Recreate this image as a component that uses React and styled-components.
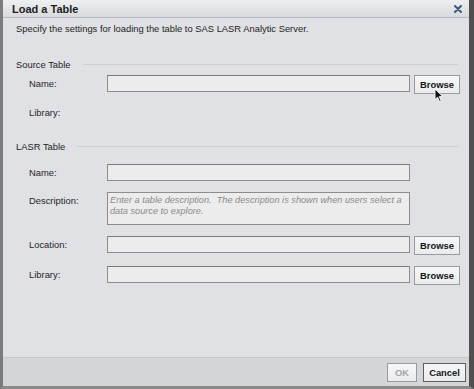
import styled, { createGlobalStyle } from "styled-components"

const Global = createGlobalStyle`
  html, body { margin: 0; padding: 0; }
  body { background: #6f6f6f; font-family: "Liberation Sans", Arial, sans-serif; }
`

const Frame = styled.div`
  width: 474px;
  height: 389px;
  box-sizing: border-box;
  display: flex;
  background: #5d5d5d;
  border-left: 3px solid #7c7c7c;
  border-right: 5px solid #4f4f4f;
  border-bottom: 3px solid #8a8a8a;
`

const Dialog = styled.div`
  flex: 1;
  min-width: 0;
  display: flex;
  flex-direction: column;
  background: #e0e1e4;
  position: relative;
`

const TitleBar = styled.div`
  height: 17px;
  display: flex;
  align-items: center;
  justify-content: space-between;
  padding: 0 7px 0 9px;
  background: linear-gradient(#eeeff1, #d8dadd);
  border-bottom: 1px solid #b8bbc0;
`

const Title = styled.div`
  font-size: 11px;
  font-weight: bold;
  color: #1d1d1d;
`

const Body = styled.div`
  flex: 1;
  padding: 4px 9px 0 13px;
`

const Intro = styled.div`
  font-size: 9.4px;
  line-height: 14px;
  color: #1e1e1e;
`

const SectionHead = styled.div`
  display: flex;
  align-items: center;
  height: 14px;
  margin: ${p => p.$top}px 2px 0 0;
  font-size: 9.4px;
  color: #1e1e1e;
  &::after {
    content: "";
    flex: 1;
    height: 1px;
    margin-left: 12px;
    background: #cdcfd3;
  }
`

const Rows = styled.div`
  display: flex;
  flex-direction: column;
  gap: ${p => p.$gap}px;
  margin-top: ${p => p.$top}px;
  padding-left: 13px;
`

const Row = styled.div`
  display: grid;
  grid-template-columns: 74px 303px 46px;
  column-gap: 4px;
  align-items: start;
  min-height: 17px;
`

const Label = styled.div`
  font-size: 9.4px;
  color: #262626;
  line-height: ${p => (p.$top ? "14px" : "17px")};
  padding-top: ${p => (p.$top ? "2px" : "0")};
`

const Input = styled.div`
  height: 17px;
  box-sizing: border-box;
  background: #ececec;
  border: 1px solid #8d8d8d;
  border-top-color: #7a7a7a;
`

const TextArea = styled.div`
  height: 33px;
  box-sizing: border-box;
  background: #ececec;
  border: 1px solid #8d8d8d;
  padding: 2px 2px;
  font-size: 9.2px;
  font-style: italic;
  line-height: 10.5px;
  color: #8a8a8a;
`

const Button = styled.div`
  height: 19px;
  box-sizing: border-box;
  display: flex;
  align-items: center;
  justify-content: center;
  background: linear-gradient(#f6f7f8, #eaebed);
  border: 1px solid ${p => (p.$strong ? "#5e5e5e" : "#9a9b9e")};
  font-size: 9.4px;
  font-weight: bold;
  color: ${p => (p.$disabled ? "#a3a4a7" : "#151515")};
  width: ${p => p.$w}px;
`

const Footer = styled.div`
  height: 28px;
  border-top: 1px solid #c6c8cc;
  background: #d3d5d9;
  display: flex;
  align-items: center;
  justify-content: flex-end;
  gap: 6px;
  padding-right: 3px;
`

const Cursor = styled.svg`
  position: absolute;
  left: 431px;
  top: 88px;
`

function Field({ label, browse }) {
  return (
    <Row>
      <Label>{label}</Label>
      <Input />
      {browse && <Button $w={46}>Browse</Button>}
    </Row>
  )
}

export default function App() {
  return (
    <>
      <Global />
      <Frame>
        <Dialog>
          <TitleBar>
            <Title>Load a Table</Title>
            <svg width="8" height="8" viewBox="0 0 8 8">
              <path d="M1 1 L7 7 M7 1 L1 7" stroke="#3d5a7e" strokeWidth="2" strokeLinecap="round" />
            </svg>
          </TitleBar>
          <Body>
            <Intro>Specify the settings for loading the table to SAS LASR Analytic Server.</Intro>

            <SectionHead $top={21}>Source Table</SectionHead>
            <Rows $gap={10} $top={4}>
              <Field label="Name:" browse />
              <Row>
                <Label>Library:</Label>
              </Row>
            </Rows>

            <SectionHead $top={18}>LASR Table</SectionHead>
            <Rows $gap={11} $top={11}>
              <Field label="Name:" />
              <Row>
                <Label $top>Description:</Label>
                <TextArea>
                  Enter a table description.&nbsp; The description is shown when users select a data source to explore.
                </TextArea>
              </Row>
              <Field label="Location:" browse />
              <Field label="Library:" browse />
            </Rows>
          </Body>
          <Footer>
            <Button $w={30} $disabled>OK</Button>
            <Button $w={43} $strong>Cancel</Button>
          </Footer>
          <Cursor width="10" height="15" viewBox="0 0 10 15">
            <path d="M1 1 L1 11.5 L3.6 9.2 L5.6 13.6 L7.2 12.9 L5.3 8.6 L8.8 8.6 Z" fill="#111" stroke="#fff" strokeWidth="0.9" />
          </Cursor>
        </Dialog>
      </Frame>
    </>
  )
}
